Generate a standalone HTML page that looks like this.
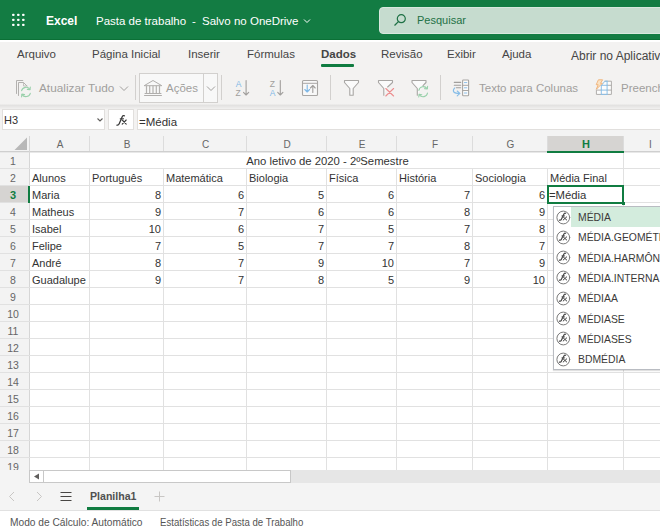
<!DOCTYPE html>
<html><head><meta charset="utf-8">
<style>
*{box-sizing:border-box;margin:0;padding:0}
html,body{width:660px;height:528px;overflow:hidden;background:#f3f2f1;font-family:"Liberation Sans",sans-serif;color:#323130;position:relative}
div,svg{position:absolute;white-space:nowrap}
.tab{top:46px;font-size:11.5px;color:#454545;line-height:16px}
.rb{top:81px;font-size:11.5px;color:#a19f9d;line-height:14px}
.sep{top:75px;width:1px;height:25px;background:#d2d0ce}
.ch{top:138px;font-size:10px;color:#666;text-align:center;line-height:14px}
.rh{left:0;width:26px;text-align:center;font-size:10.5px;color:#666;line-height:18px}
.vl{width:1px;background:#e1e1e1}
.hl{height:1px;background:#e1e1e1}
.c{font-size:11px;color:#333;line-height:18px}
.dd{left:578px;font-size:10.4px;color:#3b3a39;line-height:14px}
</style></head><body>

<div style="left:0;top:0;width:660px;height:40px;background:#137c43;border-bottom:1px solid #0b7036"></div>
<div style="left:0;top:40px;width:660px;height:2px;background:#fff"></div>
<svg style="left:0;top:0" width="30" height="30" viewBox="0 0 30 30"><g fill="#fff"><rect x="12" y="13.7" width="2.6" height="2.2" rx="1"/><rect x="12" y="18.7" width="2.6" height="2.2" rx="1"/><rect x="12" y="23.7" width="2.6" height="2.2" rx="1"/><rect x="17" y="13.7" width="2.6" height="2.2" rx="1"/><rect x="17" y="18.7" width="2.6" height="2.2" rx="1"/><rect x="17" y="23.7" width="2.6" height="2.2" rx="1"/><rect x="22" y="13.7" width="2.6" height="2.2" rx="1"/><rect x="22" y="18.7" width="2.6" height="2.2" rx="1"/><rect x="22" y="23.7" width="2.6" height="2.2" rx="1"/></g></svg>
<div style="left:46px;top:14px;font-size:12px;font-weight:bold;color:#fff;line-height:15px">Excel</div>
<div style="left:96px;top:14px;font-size:11.5px;color:#fff;line-height:15px">Pasta de trabalho</div>
<div style="left:192px;top:14px;font-size:11.5px;color:#fff;line-height:15px">-</div>
<div style="left:202px;top:14px;font-size:11.5px;color:#fff;line-height:15px">Salvo no OneDrive</div>
<svg style="left:303px;top:18px" width="8" height="6" viewBox="0 0 8 6"><path d="M1 1.5 L4 4.5 L7 1.5" stroke="#fff" stroke-width="1" fill="none"/></svg>
<div style="left:379px;top:7px;width:290px;height:27px;background:#c6dccf;border-radius:4px;border:1px solid #d8e8de"></div>
<svg style="left:393px;top:13px" width="14" height="14" viewBox="0 0 14 14"><circle cx="8.3" cy="5.7" r="4" stroke="#1e7145" stroke-width="1.2" fill="none"/><path d="M5.4 8.6 L1.5 12.5" stroke="#1e7145" stroke-width="1.3"/></svg>
<div style="left:417px;top:13px;font-size:11px;color:#1e7145;line-height:15px">Pesquisar</div>
<div class="tab" style="left:17px">Arquivo</div>
<div class="tab" style="left:92px">Página Inicial</div>
<div class="tab" style="left:188px">Inserir</div>
<div class="tab" style="left:247px">Fórmulas</div>
<div class="tab" style="left:381px">Revisão</div>
<div class="tab" style="left:447px">Exibir</div>
<div class="tab" style="left:502px">Ajuda</div>
<div class="tab" style="left:321px;font-weight:bold">Dados</div>
<div style="left:321px;top:64px;width:33px;height:3px;background:#107c41;border-radius:1px"></div>
<div class="tab" style="left:571px;top:48px;font-size:12px">Abrir no Aplicativo</div>
<div class="rb" style="left:39px;font-size:11.8px">Atualizar Tudo</div>
<svg style="left:119px;top:85px" width="10" height="7" viewBox="0 0 10 7"><path d="M1 1.5 L5 5.5 L9 1.5" stroke="#a19f9d" stroke-width="1" fill="none"/></svg>
<div class="sep" style="left:135px"></div>
<div class="sep" style="left:221px"></div>
<div class="sep" style="left:330px"></div>
<div class="sep" style="left:440px"></div>
<div style="left:139px;top:73px;width:79px;height:30px;border:1px solid #d2d0ce;background:#f8f8f8"></div>
<div style="left:203px;top:74px;width:1px;height:28px;background:#d2d0ce"></div>
<div class="rb" style="left:166px">Ações</div>
<svg style="left:206px;top:85px" width="10" height="7" viewBox="0 0 10 7"><path d="M1 1.5 L5 5.5 L9 1.5" stroke="#a19f9d" stroke-width="1" fill="none"/></svg>
<div class="rb" style="left:479px">Texto para Colunas</div>
<div class="rb" style="left:621px">Preenchimento</div>
<svg style="left:0;top:0" width="660" height="110" viewBox="0 0 660 110" fill="none" stroke-linecap="round" stroke-linejoin="round"><path d="M16.5 93.5 V80.5 H22.8" stroke="#b3b1af" stroke-width="1"/><path d="M18.5 95.5 V82.5 H23.5 L27 86" stroke="#b3b1af" stroke-width="1"/><path d="M23.5 82.5 V86 H27" stroke="#b8b6b4" stroke-width="0.8"/><path d="M21.6 90.6 A4.6 4.6 0 0 1 29.8 89.3" stroke="#98d0aa" stroke-width="1.1"/><path d="M30.3 87 L30 89.8 L27.3 89.4" stroke="#98d0aa" stroke-width="1.1"/><path d="M30.3 93.3 A4.6 4.6 0 0 1 22.1 94.6" stroke="#98d0aa" stroke-width="1.1"/><path d="M21.6 96.9 L21.9 94.1 L24.6 94.5" stroke="#98d0aa" stroke-width="1.1"/><path d="M144.5 85.5 L153 80.5 L161.5 85.5 Z" stroke="#b0aeac" stroke-width="1"/><path d="M146.5 86 V93 M149.7 86 V93 M153 86 V93 M156.3 86 V93 M159.5 86 V93" stroke="#b4b2b0" stroke-width="1.2"/><path d="M145 93.5 H161 M144.5 95.5 H161.5" stroke="#b0aeac" stroke-width="1"/><text x="238.5" y="86.8" font-family="Liberation Sans" font-size="8.5" fill="#7fb8e6" text-anchor="middle">A</text><text x="238.2" y="95.8" font-family="Liberation Sans" font-size="8.5" fill="#a19f9d" text-anchor="middle">Z</text><path d="M246.1 80.5 V95 M243.5 92.3 L246.1 95 L248.7 92.3" stroke="#a19f9d" stroke-width="1.1"/><text x="272.4" y="86.8" font-family="Liberation Sans" font-size="8.5" fill="#a19f9d" text-anchor="middle">Z</text><text x="272.7" y="95.8" font-family="Liberation Sans" font-size="8.5" fill="#7fb8e6" text-anchor="middle">A</text><path d="M280.3 80.5 V95 M277.7 92.3 L280.3 95 L282.9 92.3" stroke="#a19f9d" stroke-width="1.1"/><rect x="302.5" y="80.5" width="15" height="15" rx="1" stroke="#a8a6a4" stroke-width="1.1" fill="#f8f8f8"/><path d="M302.5 83.3 H317.5" stroke="#a8a6a4" stroke-width="1"/><path d="M307.2 85 V92 M304.8 89.5 L307.2 92 L309.6 89.5" stroke="#7fb8e6" stroke-width="1.1"/><path d="M312.8 92.5 V85.5 M310.4 88 L312.8 85.5 L315.2 88" stroke="#a19f9d" stroke-width="1.1"/><path d="M344.5 80.5 H358.5 V82.5 L353.2 88.5 V95.3 H349.8 V88.5 L344.5 82.5 Z" stroke="#a8a6a4" stroke-width="1.1" fill="#fbfbfb"/><path d="M383.8 95.3 V88.5 L378.5 82.5 V80.5 H392.5 V82.5 L387.6 87" stroke="#a8a6a4" stroke-width="1.1" fill="#fbfbfb"/><path d="M385.8 88.5 L393.6 96 M393.6 88.5 L385.8 96" stroke="#ec8e8f" stroke-width="1.1"/><path d="M417.3 95.3 V88.5 L412 82.5 V80.5 H426 V82.5 L423 85.6" stroke="#a8a6a4" stroke-width="1.1" fill="#fbfbfb"/><path d="M418.9 90.4 A4.5 4.5 0 0 1 427 88.5" stroke="#98d0aa" stroke-width="1.1"/><path d="M427.6 86.3 L427.3 89 L424.6 88.6" stroke="#98d0aa" stroke-width="1.1"/><path d="M427.5 93 A4.5 4.5 0 0 1 419.4 94.9" stroke="#98d0aa" stroke-width="1.1"/><path d="M418.8 97 L419.1 94.3 L421.8 94.7" stroke="#98d0aa" stroke-width="1.1"/><path d="M454.3 82.4 H460.7 M454.3 85.3 H460.7 M456.4 87.7 H460.7" stroke="#a19f9d" stroke-width="1.1"/><rect x="462.6" y="80" width="6" height="15.7" rx="0.8" stroke="#a8a6a4" stroke-width="1.1" fill="#fbfbfb"/><path d="M462.6 85.3 H468.6 M462.6 90.5 H468.6" stroke="#a8a6a4" stroke-width="1"/><path d="M464.4 82.6 H466.8 M464.4 87.8 H466.8 M464.4 93 H466.8" stroke="#7fb8e6" stroke-width="0.9"/><path d="M454.8 87.8 Q452.5 90 453.8 92 Q455.2 93.4 459.8 93.4 M457.2 91 L459.9 93.4 L457.2 95.9" stroke="#86bde8" stroke-width="1.1"/><path d="M604.9 81.5 H611 V94 H597 V90.6 L601.3 85.6 Z" fill="#fcfcfc"/><path d="M604.9 81.2 H611.4 V94.4 H596.4 V90.6 M607 85.3 H611.4 M596.4 90.1 H601.3 M607.1 90.1 H611.4" stroke="#b0aeac" stroke-width="1" fill="none"/><path d="M607.1 81.2 V94.4 M601.3 85.6 V94.4 M601.3 85.6 L604.9 81.2 H607.1 M601.3 85.3 H607.1 M601.3 90.1 H607.1 M601.3 94.4 H607.1" stroke="#8cbfe6" stroke-width="1" fill="none"/><path d="M598.8 79.8 H602.6 L600.5 83.3 H602.3 L596.3 89.3 L598.2 84.7 H596.6 Z" fill="#fbe3c4" stroke="#f0b074" stroke-width="0.9"/></svg>
<div style="left:0;top:104px;width:660px;height:5px;background:linear-gradient(#f0efee,#e3e2e1 30%,#ebeae9 70%,#f1f0ef)"></div>
<div style="left:2px;top:109px;width:103px;height:21px;background:#fff;border:1px solid #e1dfdd"></div>
<div style="left:4px;top:113px;font-size:11px;color:#323130;line-height:14px">H3</div>
<svg style="left:96px;top:117px" width="8" height="6" viewBox="0 0 8 6"><path d="M1.5 1.5 L4 4 L6.5 1.5" stroke="#605e5c" stroke-width="1.1" fill="none"/></svg>
<div style="left:108px;top:109px;width:26px;height:21px;background:#fff;border:1px solid #e1dfdd"></div>
<svg style="left:0;top:0" width="140" height="135" fill="none" stroke="#3a3a3a" stroke-linecap="round"><path d="M124.4 115.8 Q123.2 115 122.2 116.8 L119.2 123.8 Q118.4 125.6 116.9 125.1" stroke-width="1.3"/><path d="M120.2 118.8 H123.6" stroke-width="1"/><path d="M122.2 120 L126.2 124.2 M126.2 120 L122.2 124.2" stroke-width="1.1"/></svg>
<div style="left:137px;top:109px;width:530px;height:21px;background:#fff;border:1px solid #e1dfdd"></div>
<div style="left:139px;top:115px;font-size:11.5px;color:#323130;line-height:14px">=Média</div>
<div style="left:0;top:130px;width:660px;height:22px;background:#f3f3f3"></div>
<div style="left:0;top:152px;width:29px;height:318px;background:#f3f3f3"></div>
<div style="left:30px;top:152px;width:630px;height:318px;background:#fff"></div>
<div style="left:0;top:151px;width:660px;height:1px;background:#cfcfcf"></div>
<div style="left:0;top:152px;width:660px;height:1px;background:#e8e8e8"></div>
<div style="left:29px;top:136px;width:1px;height:334px;background:#d6d6d6"></div>
<svg style="left:14px;top:137px" width="14" height="14" viewBox="0 0 14 14"><path d="M13 0.5 L13 13 L0.5 13 Z" fill="#b8b8b8"/></svg>
<div style="left:547px;top:136px;width:76px;height:15px;background:#d6d4d2"></div>
<div style="left:0;top:186px;width:28px;height:16px;background:#d6d4d2"></div>
<div class="vl" style="left:89px;top:136px;height:15px;background:#dcdcdc"></div>
<div class="vl" style="left:89px;top:168px;height:302px"></div>
<div class="vl" style="left:163px;top:136px;height:15px;background:#dcdcdc"></div>
<div class="vl" style="left:163px;top:168px;height:302px"></div>
<div class="vl" style="left:246px;top:136px;height:15px;background:#dcdcdc"></div>
<div class="vl" style="left:246px;top:168px;height:302px"></div>
<div class="vl" style="left:326px;top:136px;height:15px;background:#dcdcdc"></div>
<div class="vl" style="left:326px;top:168px;height:302px"></div>
<div class="vl" style="left:396px;top:136px;height:15px;background:#dcdcdc"></div>
<div class="vl" style="left:396px;top:168px;height:302px"></div>
<div class="vl" style="left:472px;top:136px;height:15px;background:#dcdcdc"></div>
<div class="vl" style="left:472px;top:168px;height:302px"></div>
<div class="vl" style="left:547px;top:136px;height:15px;background:#dcdcdc"></div>
<div class="vl" style="left:547px;top:168px;height:302px"></div>
<div class="vl" style="left:623px;top:136px;height:15px;background:#dcdcdc"></div>
<div class="vl" style="left:623px;top:152px;height:318px"></div>
<div class="hl" style="left:0;top:168px;width:660px"></div>
<div class="hl" style="left:0;top:185px;width:660px"></div>
<div class="hl" style="left:0;top:202px;width:660px"></div>
<div class="hl" style="left:0;top:219px;width:660px"></div>
<div class="hl" style="left:0;top:236px;width:660px"></div>
<div class="hl" style="left:0;top:253px;width:660px"></div>
<div class="hl" style="left:0;top:270px;width:660px"></div>
<div class="hl" style="left:0;top:287px;width:660px"></div>
<div class="hl" style="left:0;top:304px;width:660px"></div>
<div class="hl" style="left:0;top:321px;width:660px"></div>
<div class="hl" style="left:0;top:338px;width:660px"></div>
<div class="hl" style="left:0;top:355px;width:660px"></div>
<div class="hl" style="left:0;top:372px;width:660px"></div>
<div class="hl" style="left:0;top:389px;width:660px"></div>
<div class="hl" style="left:0;top:406px;width:660px"></div>
<div class="hl" style="left:0;top:423px;width:660px"></div>
<div class="hl" style="left:0;top:440px;width:660px"></div>
<div class="hl" style="left:0;top:457px;width:660px"></div>
<div style="left:547px;top:151px;width:77px;height:2px;background:#107c41"></div>
<div class="ch" style="left:30px;width:60px">A</div>
<div class="ch" style="left:90px;width:74px">B</div>
<div class="ch" style="left:164px;width:83px">C</div>
<div class="ch" style="left:247px;width:80px">D</div>
<div class="ch" style="left:327px;width:70px">E</div>
<div class="ch" style="left:397px;width:76px">F</div>
<div class="ch" style="left:473px;width:75px">G</div>
<div class="ch" style="left:548px;width:76px;color:#107c41;font-weight:bold;font-size:11px;top:137px">H</div>
<div class="ch" style="left:624px;width:53px">I</div>
<div class="rh" style="top:152px">1</div>
<div class="rh" style="top:169px">2</div>
<div class="rh" style="top:186px;color:#107c41;font-weight:bold;font-size:11px">3</div>
<div class="rh" style="top:203px">4</div>
<div class="rh" style="top:220px">5</div>
<div class="rh" style="top:237px">6</div>
<div class="rh" style="top:254px">7</div>
<div class="rh" style="top:271px">8</div>
<div class="rh" style="top:288px">9</div>
<div class="rh" style="top:305px">10</div>
<div class="rh" style="top:322px">11</div>
<div class="rh" style="top:339px">12</div>
<div class="rh" style="top:356px">13</div>
<div class="rh" style="top:373px">14</div>
<div class="rh" style="top:390px">15</div>
<div class="rh" style="top:407px">16</div>
<div class="rh" style="top:424px">17</div>
<div class="rh" style="top:441px">18</div>
<div class="rh" style="top:458px">19</div>
<div style="left:28px;top:186px;width:2px;height:17px;background:#107c41"></div>
<div class="c" style="left:31px;width:593px;top:152px;text-align:center;font-size:11.3px">Ano letivo de 2020 - 2ºSemestre</div>
<div class="c" style="left:32px;top:169px">Alunos</div>
<div class="c" style="left:92px;top:169px">Português</div>
<div class="c" style="left:166px;top:169px">Matemática</div>
<div class="c" style="left:249px;top:169px">Biologia</div>
<div class="c" style="left:329px;top:169px">Física</div>
<div class="c" style="left:399px;top:169px">História</div>
<div class="c" style="left:475px;top:169px">Sociologia</div>
<div class="c" style="left:550px;top:169px">Média Final</div>
<div class="c" style="left:32px;top:186px">Maria</div>
<div class="c" style="left:90px;width:71px;top:186px;text-align:right">8</div>
<div class="c" style="left:164px;width:80px;top:186px;text-align:right">6</div>
<div class="c" style="left:247px;width:77px;top:186px;text-align:right">5</div>
<div class="c" style="left:327px;width:67px;top:186px;text-align:right">6</div>
<div class="c" style="left:397px;width:73px;top:186px;text-align:right">7</div>
<div class="c" style="left:473px;width:72px;top:186px;text-align:right">6</div>
<div class="c" style="left:32px;top:203px">Matheus</div>
<div class="c" style="left:90px;width:71px;top:203px;text-align:right">9</div>
<div class="c" style="left:164px;width:80px;top:203px;text-align:right">7</div>
<div class="c" style="left:247px;width:77px;top:203px;text-align:right">6</div>
<div class="c" style="left:327px;width:67px;top:203px;text-align:right">6</div>
<div class="c" style="left:397px;width:73px;top:203px;text-align:right">8</div>
<div class="c" style="left:473px;width:72px;top:203px;text-align:right">9</div>
<div class="c" style="left:32px;top:220px">Isabel</div>
<div class="c" style="left:90px;width:71px;top:220px;text-align:right">10</div>
<div class="c" style="left:164px;width:80px;top:220px;text-align:right">6</div>
<div class="c" style="left:247px;width:77px;top:220px;text-align:right">7</div>
<div class="c" style="left:327px;width:67px;top:220px;text-align:right">5</div>
<div class="c" style="left:397px;width:73px;top:220px;text-align:right">7</div>
<div class="c" style="left:473px;width:72px;top:220px;text-align:right">8</div>
<div class="c" style="left:32px;top:237px">Felipe</div>
<div class="c" style="left:90px;width:71px;top:237px;text-align:right">7</div>
<div class="c" style="left:164px;width:80px;top:237px;text-align:right">5</div>
<div class="c" style="left:247px;width:77px;top:237px;text-align:right">7</div>
<div class="c" style="left:327px;width:67px;top:237px;text-align:right">7</div>
<div class="c" style="left:397px;width:73px;top:237px;text-align:right">8</div>
<div class="c" style="left:473px;width:72px;top:237px;text-align:right">7</div>
<div class="c" style="left:32px;top:254px">André</div>
<div class="c" style="left:90px;width:71px;top:254px;text-align:right">8</div>
<div class="c" style="left:164px;width:80px;top:254px;text-align:right">7</div>
<div class="c" style="left:247px;width:77px;top:254px;text-align:right">9</div>
<div class="c" style="left:327px;width:67px;top:254px;text-align:right">10</div>
<div class="c" style="left:397px;width:73px;top:254px;text-align:right">7</div>
<div class="c" style="left:473px;width:72px;top:254px;text-align:right">9</div>
<div class="c" style="left:32px;top:271px">Guadalupe</div>
<div class="c" style="left:90px;width:71px;top:271px;text-align:right">9</div>
<div class="c" style="left:164px;width:80px;top:271px;text-align:right">7</div>
<div class="c" style="left:247px;width:77px;top:271px;text-align:right">8</div>
<div class="c" style="left:327px;width:67px;top:271px;text-align:right">5</div>
<div class="c" style="left:397px;width:73px;top:271px;text-align:right">9</div>
<div class="c" style="left:473px;width:72px;top:271px;text-align:right">10</div>
<div style="left:547px;top:185px;width:77px;height:19px;border:2px solid #107c41;background:#fff"></div>
<div style="left:622px;top:202px;width:3px;height:3px;background:#107c41"></div>
<div class="c" style="left:549px;top:186px;font-size:11.3px">=Média</div>
<div style="left:553px;top:206px;width:120px;height:164px;background:#fff;border:1px solid #b9bcc2;box-shadow:0 1px 1px rgba(0,0,0,0.12)"></div>
<div style="left:571px;top:207px;width:100px;height:20px;background:#d3ecdd"></div>
<svg style="left:555px;top:208.50px" width="17" height="17" viewBox="0 0 17 17" fill="none" stroke-linecap="round"><circle cx="8.3" cy="8.5" r="6.4" stroke="#7a7a7a" stroke-width="1" fill="#fff"/><path d="M10.6 4.3 Q9.5 3.7 8.8 5.2 L6.4 10.3 Q5.8 11.6 4.4 11.1" stroke="#444" stroke-width="1.2"/><path d="M6.9 6.9 H9.7" stroke="#444" stroke-width="0.9"/><path d="M8.2 7.9 L11.7 11 M11.7 7.9 L8.2 11" stroke="#444" stroke-width="1"/></svg>
<div class="dd" style="top:211.0px">MÉDIA</div>
<svg style="left:555px;top:228.83px" width="17" height="17" viewBox="0 0 17 17" fill="none" stroke-linecap="round"><circle cx="8.3" cy="8.5" r="6.4" stroke="#7a7a7a" stroke-width="1" fill="#fff"/><path d="M10.6 4.3 Q9.5 3.7 8.8 5.2 L6.4 10.3 Q5.8 11.6 4.4 11.1" stroke="#444" stroke-width="1.2"/><path d="M6.9 6.9 H9.7" stroke="#444" stroke-width="0.9"/><path d="M8.2 7.9 L11.7 11 M11.7 7.9 L8.2 11" stroke="#444" stroke-width="1"/></svg>
<div class="dd" style="top:231.3px">MÉDIA.GEOMÉTRICA</div>
<svg style="left:555px;top:249.16px" width="17" height="17" viewBox="0 0 17 17" fill="none" stroke-linecap="round"><circle cx="8.3" cy="8.5" r="6.4" stroke="#7a7a7a" stroke-width="1" fill="#fff"/><path d="M10.6 4.3 Q9.5 3.7 8.8 5.2 L6.4 10.3 Q5.8 11.6 4.4 11.1" stroke="#444" stroke-width="1.2"/><path d="M6.9 6.9 H9.7" stroke="#444" stroke-width="0.9"/><path d="M8.2 7.9 L11.7 11 M11.7 7.9 L8.2 11" stroke="#444" stroke-width="1"/></svg>
<div class="dd" style="top:251.7px">MÉDIA.HARMÔNICA</div>
<svg style="left:555px;top:269.49px" width="17" height="17" viewBox="0 0 17 17" fill="none" stroke-linecap="round"><circle cx="8.3" cy="8.5" r="6.4" stroke="#7a7a7a" stroke-width="1" fill="#fff"/><path d="M10.6 4.3 Q9.5 3.7 8.8 5.2 L6.4 10.3 Q5.8 11.6 4.4 11.1" stroke="#444" stroke-width="1.2"/><path d="M6.9 6.9 H9.7" stroke="#444" stroke-width="0.9"/><path d="M8.2 7.9 L11.7 11 M11.7 7.9 L8.2 11" stroke="#444" stroke-width="1"/></svg>
<div class="dd" style="top:272.0px">MÉDIA.INTERNA</div>
<svg style="left:555px;top:289.82px" width="17" height="17" viewBox="0 0 17 17" fill="none" stroke-linecap="round"><circle cx="8.3" cy="8.5" r="6.4" stroke="#7a7a7a" stroke-width="1" fill="#fff"/><path d="M10.6 4.3 Q9.5 3.7 8.8 5.2 L6.4 10.3 Q5.8 11.6 4.4 11.1" stroke="#444" stroke-width="1.2"/><path d="M6.9 6.9 H9.7" stroke="#444" stroke-width="0.9"/><path d="M8.2 7.9 L11.7 11 M11.7 7.9 L8.2 11" stroke="#444" stroke-width="1"/></svg>
<div class="dd" style="top:292.3px">MÉDIAA</div>
<svg style="left:555px;top:310.15px" width="17" height="17" viewBox="0 0 17 17" fill="none" stroke-linecap="round"><circle cx="8.3" cy="8.5" r="6.4" stroke="#7a7a7a" stroke-width="1" fill="#fff"/><path d="M10.6 4.3 Q9.5 3.7 8.8 5.2 L6.4 10.3 Q5.8 11.6 4.4 11.1" stroke="#444" stroke-width="1.2"/><path d="M6.9 6.9 H9.7" stroke="#444" stroke-width="0.9"/><path d="M8.2 7.9 L11.7 11 M11.7 7.9 L8.2 11" stroke="#444" stroke-width="1"/></svg>
<div class="dd" style="top:312.6px">MÉDIASE</div>
<svg style="left:555px;top:330.48px" width="17" height="17" viewBox="0 0 17 17" fill="none" stroke-linecap="round"><circle cx="8.3" cy="8.5" r="6.4" stroke="#7a7a7a" stroke-width="1" fill="#fff"/><path d="M10.6 4.3 Q9.5 3.7 8.8 5.2 L6.4 10.3 Q5.8 11.6 4.4 11.1" stroke="#444" stroke-width="1.2"/><path d="M6.9 6.9 H9.7" stroke="#444" stroke-width="0.9"/><path d="M8.2 7.9 L11.7 11 M11.7 7.9 L8.2 11" stroke="#444" stroke-width="1"/></svg>
<div class="dd" style="top:333.0px">MÉDIASES</div>
<svg style="left:555px;top:350.81px" width="17" height="17" viewBox="0 0 17 17" fill="none" stroke-linecap="round"><circle cx="8.3" cy="8.5" r="6.4" stroke="#7a7a7a" stroke-width="1" fill="#fff"/><path d="M10.6 4.3 Q9.5 3.7 8.8 5.2 L6.4 10.3 Q5.8 11.6 4.4 11.1" stroke="#444" stroke-width="1.2"/><path d="M6.9 6.9 H9.7" stroke="#444" stroke-width="0.9"/><path d="M8.2 7.9 L11.7 11 M11.7 7.9 L8.2 11" stroke="#444" stroke-width="1"/></svg>
<div class="dd" style="top:353.3px">BDMÉDIA</div>
<div style="left:0;top:470px;width:660px;height:40px;background:#f4f4f4"></div>
<div style="left:290px;top:470px;width:370px;height:13px;background:#e6e6e6"></div>
<div style="left:29px;top:470px;width:15px;height:13px;background:#fff;border:1px solid #c8c8c8"></div>
<svg style="left:33px;top:473px" width="7" height="7" viewBox="0 0 7 7"><path d="M6 0.5 L6 6.5 L1 3.5 Z" fill="#605e5c"/></svg>
<div style="left:43px;top:470px;width:248px;height:13px;background:#fff;border:1px solid #c8c8c8"></div>
<svg style="left:8px;top:491px" width="8" height="11" viewBox="0 0 8 11"><path d="M6 1 L1.5 5.5 L6 10" stroke="#c8c6c4" stroke-width="1" fill="none"/></svg>
<svg style="left:35px;top:491px" width="8" height="11" viewBox="0 0 8 11"><path d="M2 1 L6.5 5.5 L2 10" stroke="#c8c6c4" stroke-width="1" fill="none"/></svg>
<svg style="left:60px;top:491px" width="12" height="11" viewBox="0 0 12 11"><path d="M0.5 1.5 H11.5 M0.5 5.5 H11.5 M0.5 9.5 H11.5" stroke="#484644" stroke-width="1.2" fill="none"/></svg>
<div style="left:90px;top:490px;font-size:10.6px;font-weight:bold;color:#505050;line-height:13px">Planilha1</div>
<div style="left:87px;top:507px;width:52px;height:3px;background:#107c41"></div>
<svg style="left:154px;top:491px" width="11" height="11" viewBox="0 0 11 11"><path d="M5.5 0.5 V10.5 M0.5 5.5 H10.5" stroke="#c8c6c4" stroke-width="1" fill="none"/></svg>
<div style="left:0;top:510px;width:660px;height:1px;background:#e1e1e1"></div>
<div style="left:0;top:511px;width:660px;height:17px;background:#fff"></div>
<div style="left:10px;top:517px;font-size:10.2px;color:#555;line-height:12px">Modo de Cálculo: Automático</div>
<div style="left:159.5px;top:517px;font-size:10px;color:#555;line-height:12px;transform:scaleX(0.962);transform-origin:0 0">Estatísticas de Pasta de Trabalho</div>
</body></html>
